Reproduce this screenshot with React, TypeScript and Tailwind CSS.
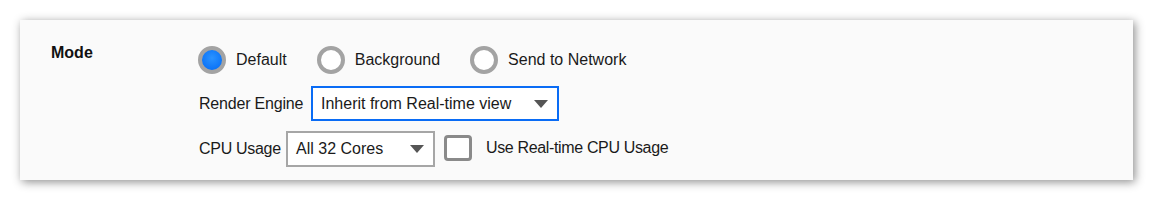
import { useState } from 'react';

const FONT = "font-['Liberation_Sans',Arial,sans-serif]";

function Radio({ label, checked, onClick }: { label: string; checked: boolean; onClick: () => void }) {
  return (
    <button type="button" onClick={onClick} className="flex items-center gap-[10px] cursor-pointer">
      <span
        className={`w-[28px] h-[28px] rounded-full border-[4px] border-[#a3a3a3] ${
          checked ? 'bg-[radial-gradient(circle_at_50%_40%,#2a93ff,#0068f5)]' : 'bg-white'
        }`}
      />
      <span className="text-[16px] text-[#1a1a1a] leading-none">{label}</span>
    </button>
  );
}

function Caret() {
  return (
    <svg width="14" height="8" viewBox="0 0 14 8" className="shrink-0">
      <path d="M0 0 H14 L7 8 Z" fill="#555555" />
    </svg>
  );
}

export default function App() {
  const [mode, setMode] = useState('Default');
  const [realtimeCpu, setRealtimeCpu] = useState(false);

  return (
    <div className={`w-[1153px] h-[203px] bg-white p-[20px] ${FONT}`}>
      <div className="w-[1113px] h-[160px] bg-[#fafafa] shadow-[2px_2px_9px_rgba(0,0,0,0.45)] flex">
        {/* left label column */}
        <div className="w-[178px] pl-[31px] pt-[21px]">
          <span className="text-[16px] font-bold text-[#111]">Mode</span>
        </div>

        {/* controls */}
        <div className="flex flex-col pt-[26px]">
          <div className="flex items-center gap-[30px] h-[28px]">
            {['Default', 'Background', 'Send to Network'].map(m => (
              <Radio key={m} label={m} checked={mode === m} onClick={() => setMode(m)} />
            ))}
          </div>

          <div className="flex items-center mt-[12px]">
            <span className="w-[113px] text-[16px] text-[#1a1a1a] pl-[1px] tracking-[-0.2px] whitespace-nowrap">Render Engine</span>
            <div className="w-[248px] h-[35px] border-2 border-[#0a6cf5] bg-white flex items-center justify-between pl-[8px] pr-[9px]">
              <span className="text-[16px] text-[#1a1a1a]">Inherit from Real-time view</span>
              <Caret />
            </div>
          </div>

          <div className="flex items-center mt-[10px]">
            <span className="w-[88px] text-[16px] text-[#1a1a1a] pl-[1px] tracking-[-0.3px] whitespace-nowrap">CPU Usage</span>
            <div className="w-[149px] h-[36px] border-2 border-[#a6a6a6] bg-white flex items-center justify-between pl-[8px] pr-[9px]">
              <span className="text-[16px] text-[#1a1a1a]">All 32 Cores</span>
              <Caret />
            </div>
            <button
              type="button"
              onClick={() => setRealtimeCpu(v => !v)}
              className="ml-[9px] w-[28px] h-[26px] rounded-[4px] border-[3px] border-[#8a8a8a] bg-white -mt-[2px]"
            />
            <span className="ml-[14px] text-[16px] text-[#1a1a1a] -mt-[2px] tracking-[-0.35px]">Use Real-time CPU Usage</span>
          </div>
        </div>
      </div>
    </div>
  );
}
